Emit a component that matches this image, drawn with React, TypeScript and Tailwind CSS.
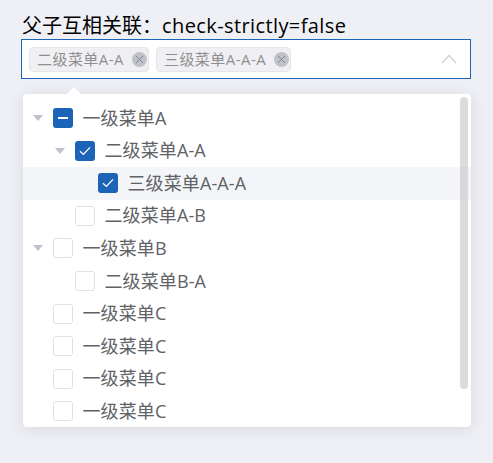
const FONT = "font-['Open_Sans','Noto_Sans_CJK_SC',sans-serif]";

type Row = { label: string; level: number; state: 'on' | 'half' | 'off'; caret?: boolean; active?: boolean };

const rows: Row[] = [
  { label: '一级菜单A', level: 0, state: 'half', caret: true },
  { label: '二级菜单A-A', level: 1, state: 'on', caret: true },
  { label: '三级菜单A-A-A', level: 2, state: 'on', active: true },
  { label: '二级菜单A-B', level: 1, state: 'off' },
  { label: '一级菜单B', level: 0, state: 'off', caret: true },
  { label: '二级菜单B-A', level: 1, state: 'off' },
  { label: '一级菜单C', level: 0, state: 'off' },
  { label: '一级菜单C', level: 0, state: 'off' },
  { label: '一级菜单C', level: 0, state: 'off' },
  { label: '一级菜单C', level: 0, state: 'off' },
];

const indent = ['pl-[10px]', 'pl-[32px]', 'pl-[55px]'];

function Box({ state }: { state: Row['state'] }) {
  if (state === 'off') {
    return <span className="w-5 h-5 shrink-0 rounded-[3px] border border-[#dfe1e8] bg-white" />;
  }
  return (
    <span className="w-5 h-5 shrink-0 rounded-[3px] bg-[#1b64b7] flex items-center justify-center">
      {state === 'half' ? (
        <span className="w-[10px] h-[2px] bg-white" />
      ) : (
        <svg width="12" height="10" viewBox="0 0 12 10" fill="none">
          <path d="M1 5.2 L4.4 8.4 L11 1.4" stroke="#fff" strokeWidth="1.3" />
        </svg>
      )}
    </span>
  );
}

function Tag({ text }: { text: string }) {
  return (
    <span className="h-[25px] flex items-center gap-[8px] pl-[7px] pr-[1px] rounded-[4px] border border-[#e6e6e8] bg-[#f0f0f2] text-[15px] tracking-[0.45px] text-[#8f8f93] whitespace-nowrap">
      <span>{text}</span>
      <span className="w-[15px] h-[15px] rounded-full bg-[#c0c2ca] flex items-center justify-center">
        <svg width="9" height="9" viewBox="0 0 9 9" fill="none">
          <path d="M1 1 L8 8 M8 1 L1 8" stroke="#85878f" strokeWidth="1" />
        </svg>
      </span>
    </span>
  );
}

export default function App() {
  return (
    <div className={`${FONT} w-[493px] h-[463px] overflow-hidden bg-[#eff0f5] pl-[21px] pr-[22px] pt-[12px]`}>
      <div className="h-[27px] pl-[1px] text-[20px] leading-[27px] text-black whitespace-nowrap">
        父子互相关联：<span className="tracking-[0.4px]">check-strictly=false</span>
      </div>
      <div className="h-[40px] border border-[#1b64b7] bg-white flex items-center pl-[7px] pr-[13px] gap-[7px]">
        <Tag text="二级菜单A-A" />
        <Tag text="三级菜单A-A-A" />
        <svg className="ml-auto" width="16" height="10" viewBox="0 0 16 10" fill="none">
          <path d="M1 9 L8 1.5 L15 9" stroke="#cdd0d8" strokeWidth="1.3" />
        </svg>
      </div>
      <div className="relative mt-[15px] ml-[2px] h-[333px] bg-white rounded-[4px] shadow-[0_2px_16px_rgba(0,0,0,0.1)] pt-[8px]">
        <span className="absolute -top-[5px] left-[46px] w-[10px] h-[10px] rotate-45 bg-white" />
        <span className="absolute top-[3px] right-[3px] w-[8px] h-[292px] rounded-[4px] bg-[#c4c4c6]/60" />
        {rows.map((r, i) => (
          <div
            key={i}
            className={`h-[32.55px] flex items-center ${indent[r.level]} ${r.active ? 'bg-[#f4f5f9]' : ''}`}
          >
            <span className="w-[20px] shrink-0 flex items-center">
              {r.caret && (
                <svg width="10" height="6" viewBox="0 0 10 6">
                  <path d="M0 0 H10 L5 6 Z" fill="#c0c2cc" />
                </svg>
              )}
            </span>
            <Box state={r.state} />
            <span className="ml-[9.5px] text-[18px] tracking-[0.1px] text-[#606266] whitespace-nowrap">{r.label}</span>
          </div>
        ))}
      </div>
    </div>
  );
}
